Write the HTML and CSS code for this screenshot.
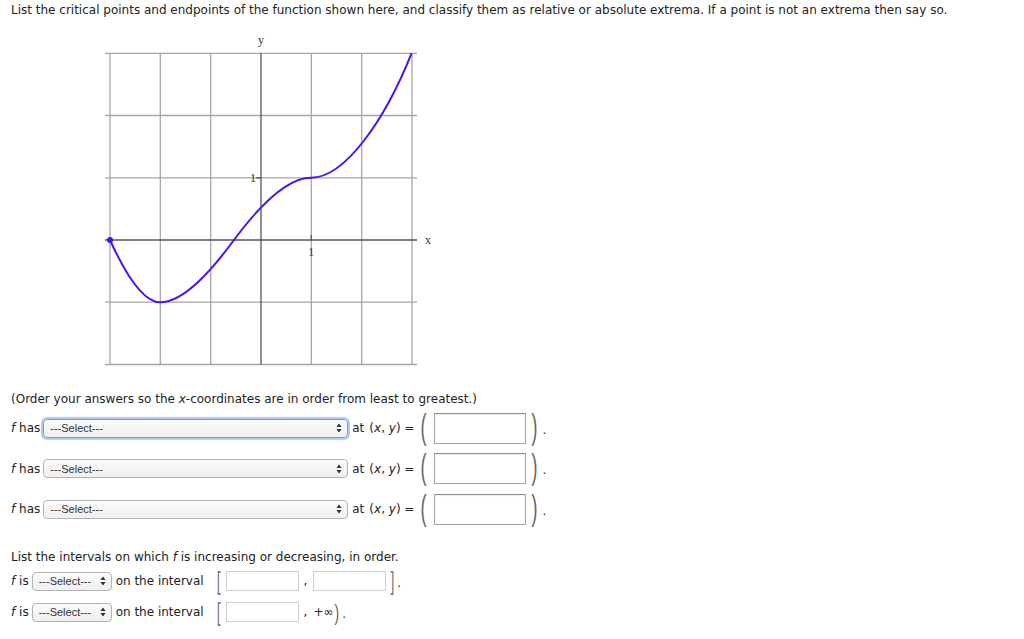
FILE: index.html
```html
<!DOCTYPE html>
<html>
<head>
<meta charset="utf-8">
<link rel="stylesheet" href="styles.css">
</head>
<body>
<div class="page">
  <p class="prompt">List the critical points and endpoints of the function shown here, and classify them as relative or absolute extrema. If a point is not an extrema then say so.</p>
  <svg class="graph" width="340" height="340" viewBox="100 30 340 340" xmlns="http://www.w3.org/2000/svg">
    <g class="grid">
      <line x1="110" y1="53.3" x2="110" y2="364.5"/>
      <line x1="160.3" y1="53.3" x2="160.3" y2="364.5"/>
      <line x1="210.7" y1="53.3" x2="210.7" y2="364.5"/>
      <line x1="311.3" y1="53.3" x2="311.3" y2="364.5"/>
      <line x1="361.7" y1="53.3" x2="361.7" y2="364.5"/>
      <line x1="412" y1="53.3" x2="412" y2="364.5"/>
      <line x1="105" y1="53.3" x2="417" y2="53.3"/>
      <line x1="105" y1="115.5" x2="417" y2="115.5"/>
      <line x1="105" y1="177.8" x2="417" y2="177.8"/>
      <line x1="105" y1="302.2" x2="417" y2="302.2"/>
      <line x1="105" y1="364.5" x2="417" y2="364.5"/>
    </g>
    <g class="axis">
      <line x1="105" y1="240" x2="417" y2="240"/>
      <line x1="261" y1="53.3" x2="261" y2="364.5"/>
      <line x1="256" y1="177.8" x2="261" y2="177.8"/>
      <line x1="311.3" y1="235" x2="311.3" y2="240"/>
    </g>
    <text class="lab" x="261" y="44" text-anchor="middle">y</text>
    <text class="lab" x="428" y="244" text-anchor="middle">x</text>
    <text class="lab" x="253" y="182" text-anchor="middle">1</text>
    <text class="lab" x="311.3" y="256" text-anchor="middle">1</text>
    <path class="curve" d="M110,240 C120,262 140,302.3 160.1,302.3 C185,302.3 214,267 234,240 C254,213 285,177.7 311,177.7 C345,177.7 385,120 411.6,53.1"/>
    <circle class="pt" cx="110" cy="240" r="3"/>
  </svg>
  <p class="note">(Order your answers so the <i>x</i>-coordinates are in order from least to greatest.)</p>

  <div class="row">
    <span class="lbl"><i>f</i> has</span>
    <div class="select wide focus"><span>---Select---</span><svg class="arr" width="6" height="10" viewBox="0 0 6 10"><path d="M3 0.5 L5.6 4 L0.4 4 Z M3 9.5 L5.6 6 L0.4 6 Z"/></svg></div>
    <span class="at">at</span>
    <span class="xy">(<i>x</i>, <i>y</i>) =</span>
    <span class="paren">(</span>
    <span class="box"></span>
    <span class="paren">)</span><span class="period">.</span>
  </div>
  <div class="row">
    <span class="lbl"><i>f</i> has</span>
    <div class="select wide"><span>---Select---</span><svg class="arr" width="6" height="10" viewBox="0 0 6 10"><path d="M3 0.5 L5.6 4 L0.4 4 Z M3 9.5 L5.6 6 L0.4 6 Z"/></svg></div>
    <span class="at">at</span>
    <span class="xy">(<i>x</i>, <i>y</i>) =</span>
    <span class="paren">(</span>
    <span class="box"></span>
    <span class="paren">)</span><span class="period">.</span>
  </div>
  <div class="row">
    <span class="lbl"><i>f</i> has</span>
    <div class="select wide"><span>---Select---</span><svg class="arr" width="6" height="10" viewBox="0 0 6 10"><path d="M3 0.5 L5.6 4 L0.4 4 Z M3 9.5 L5.6 6 L0.4 6 Z"/></svg></div>
    <span class="at">at</span>
    <span class="xy">(<i>x</i>, <i>y</i>) =</span>
    <span class="paren">(</span>
    <span class="box"></span>
    <span class="paren">)</span><span class="period">.</span>
  </div>

  <p class="note2">List the intervals on which <i>f</i> is increasing or decreasing, in order.</p>
  <div class="irow">
    <span class="lbl"><i>f</i> is</span>
    <div class="select narrow"><span>---Select---</span><svg class="arr" width="6" height="10" viewBox="0 0 6 10"><path d="M3 0.5 L5.6 4 L0.4 4 Z M3 9.5 L5.6 6 L0.4 6 Z"/></svg></div>
    <span class="on">on the interval</span>
    <span class="brk">[</span>
    <span class="sbox"></span>
    <span class="comma">,</span>
    <span class="sbox"></span>
    <span class="brk r">]</span><span class="period2">.</span>
  </div>
  <div class="irow">
    <span class="lbl"><i>f</i> is</span>
    <div class="select narrow"><span>---Select---</span><svg class="arr" width="6" height="10" viewBox="0 0 6 10"><path d="M3 0.5 L5.6 4 L0.4 4 Z M3 9.5 L5.6 6 L0.4 6 Z"/></svg></div>
    <span class="on">on the interval</span>
    <span class="brk">[</span>
    <span class="sbox"></span>
    <span class="comma">,</span>
    <span class="inf">+∞</span>
    <span class="brk2">)</span><span class="period3">.</span>
  </div>
</div>
</body>
</html>
```
FILE: styles.css
```css
html, body {
  margin: 0;
  padding: 0;
  background: #fff;
}
.page {
  padding-left: 11px;
  font-family: "DejaVu Sans", Verdana, sans-serif;
  font-size: 12px;
  color: #222;
}
.prompt {
  margin: 3px 0 0;
  line-height: 14px;
  white-space: nowrap;
}
.graph {
  display: block;
  margin: 13px 0 0 89px;
}
.grid line {
  stroke: #a6a6a6;
  stroke-width: 1.3;
}
.axis line {
  stroke: #555;
  stroke-width: 1.3;
}
.lab {
  font-family: "Liberation Serif", "Times New Roman", serif;
  font-size: 12px;
  fill: #333;
}
.curve {
  fill: none;
  stroke: #4c10f5;
  stroke-width: 2;
}
.pt {
  fill: #4c10f5;
}
.note {
  margin: 22px 0 0;
  line-height: 14px;
}
.row {
  display: flex;
  align-items: center;
  height: 40.5px;
}
.note + .row {
  margin-top: 2px;
}
.lbl {
  white-space: nowrap;
}
.select {
  box-sizing: border-box;
  display: flex;
  align-items: center;
  justify-content: space-between;
  height: 19px;
  border: 1px solid #b4b4b4;
  border-radius: 4px;
  background: linear-gradient(#fcfcfc, #efefef);
  font-family: "Liberation Sans", Arial, sans-serif;
  font-size: 11px;
  color: #333;
  padding: 0 5px 0 6px;
}
.select .arr path {
  fill: #333;
}
.wide {
  width: 305px;
  margin-left: 3px;
}
.focus {
  border-color: #6a9ee0;
  box-shadow: 0 0 1px 2px rgba(110, 160, 235, 0.55);
}
.at {
  margin-left: 4px;
}
.xy {
  margin-left: 5px;
  white-space: nowrap;
}
.paren {
  display: inline-block;
  font-family: "Liberation Sans", Arial, sans-serif;
  font-size: 18px;
  color: #666;
  transform: scaleY(1.9);
  margin-left: 6px;
}
.box {
  box-sizing: border-box;
  width: 92px;
  height: 31px;
  margin-left: 8px;
  border: 1px solid #a5a5a5;
  border-top-color: #8f8f8f;
  box-shadow: inset 0 1px 1px rgba(0,0,0,0.08);
  background: #fff;
}
.box + .paren {
  margin-left: 5px;
}
.period {
  margin-left: 5px;
  padding-top: 3px;
}
.note2 {
  margin: 20px 0 0;
  line-height: 14px;
}
.irow {
  display: flex;
  align-items: center;
  height: 31px;
}
.note2 + .irow {
  margin-top: 2px;
}
.narrow {
  width: 80px;
  margin-left: 3px;
  height: 19px;
}
.on {
  margin-left: 4px;
  white-space: nowrap;
}
.brk {
  display: inline-block;
  font-family: "Liberation Sans", Arial, sans-serif;
  font-size: 14px;
  color: #777;
  transform: scaleY(1.8);
  margin-left: 13px;
}
.brk.r {
  margin-left: 4px;
}
.sbox {
  box-sizing: border-box;
  width: 73px;
  height: 20px;
  margin-left: 5px;
  border: 1px solid #cfcfcf;
  background: #fff;
}
.comma {
  margin-left: 5px;
  margin-right: 3px;
}
.comma + .sbox {
  margin-left: 3px;
}
.inf {
  margin-left: 3px;
}
.brk2 {
  display: inline-block;
  font-family: "Liberation Sans", Arial, sans-serif;
  font-size: 14px;
  color: #666;
  transform: scaleY(1.6);
  margin-left: 1px;
}
.period2, .period3 {
  margin-left: 3px;
  padding-top: 4px;
}
```
